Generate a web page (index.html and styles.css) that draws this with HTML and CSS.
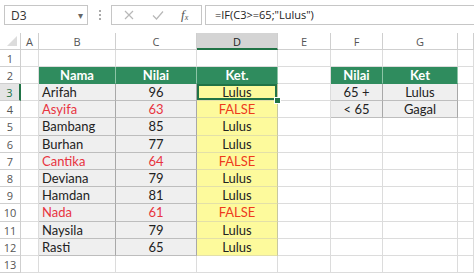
FILE: index.html
```html
<!DOCTYPE html>
<html>
<head>
<meta charset="utf-8">
<link rel="stylesheet" href="styles.css">
</head>
<body>
<div class="toolbar">
  <div class="namebox"><span>D3</span><span class="dd">▾</span></div>
  <div class="dots"><i></i><i></i><i></i></div>
  <div class="fbtns">
    <svg width="12" height="12" viewBox="0 0 12 12"><path d="M2 2 L10 10 M10 2 L2 10" stroke="#b8b8b8" stroke-width="1.2" fill="none"/></svg>
    <svg width="14" height="12" viewBox="0 0 14 12"><path d="M2 6.5 L5.5 10 L12 2.5" stroke="#b8b8b8" stroke-width="1.2" fill="none"/></svg>
    <span class="fx">f<sub>x</sub></span>
  </div>
  <div class="fbar">=IF(C3&gt;=65;"Lulus")</div>
</div>
<div class="sheet">
  <div class="c corner"><span class="tri"></span></div><div class="c ch">A</div><div class="c ch">B</div><div class="c ch">C</div><div class="c ch sel">D</div><div class="c ch">E</div><div class="c ch">F</div><div class="c ch">G</div><div class="c ch"></div>

  <div class="c rh">1</div><div class="c"></div><div class="c"></div><div class="c"></div><div class="c"></div><div class="c"></div><div class="c"></div><div class="c"></div><div class="c"></div>

  <div class="c rh">2</div><div class="c"></div><div class="c hd">Nama</div><div class="c hd">Nilai</div><div class="c hd">Ket.</div><div class="c"></div><div class="c hd">Nilai</div><div class="c hd">Ket</div><div class="c"></div>

  <div class="c rh rsel">3</div><div class="c"></div><div class="c g l">Arifah</div><div class="c g">96</div><div class="c y act">Lulus<span class="handle"></span></div><div class="c"></div><div class="c g">65 +</div><div class="c g">Lulus</div><div class="c"></div>

  <div class="c rh">4</div><div class="c"></div><div class="c g l red">Asyifa</div><div class="c g red">63</div><div class="c y f">FALSE</div><div class="c"></div><div class="c g">&lt; 65</div><div class="c g">Gagal</div><div class="c"></div>

  <div class="c rh">5</div><div class="c"></div><div class="c g l">Bambang</div><div class="c g">85</div><div class="c y">Lulus</div><div class="c"></div><div class="c"></div><div class="c"></div><div class="c"></div>

  <div class="c rh">6</div><div class="c"></div><div class="c g l">Burhan</div><div class="c g">77</div><div class="c y">Lulus</div><div class="c"></div><div class="c"></div><div class="c"></div><div class="c"></div>

  <div class="c rh">7</div><div class="c"></div><div class="c g l red">Cantika</div><div class="c g red">64</div><div class="c y f">FALSE</div><div class="c"></div><div class="c"></div><div class="c"></div><div class="c"></div>

  <div class="c rh">8</div><div class="c"></div><div class="c g l">Deviana</div><div class="c g">79</div><div class="c y">Lulus</div><div class="c"></div><div class="c"></div><div class="c"></div><div class="c"></div>

  <div class="c rh">9</div><div class="c"></div><div class="c g l">Hamdan</div><div class="c g">81</div><div class="c y">Lulus</div><div class="c"></div><div class="c"></div><div class="c"></div><div class="c"></div>

  <div class="c rh">10</div><div class="c"></div><div class="c g l red">Nada</div><div class="c g red">61</div><div class="c y f">FALSE</div><div class="c"></div><div class="c"></div><div class="c"></div><div class="c"></div>

  <div class="c rh">11</div><div class="c"></div><div class="c g l">Naysila</div><div class="c g">79</div><div class="c y">Lulus</div><div class="c"></div><div class="c"></div><div class="c"></div><div class="c"></div>

  <div class="c rh">12</div><div class="c"></div><div class="c g l">Rasti</div><div class="c g">65</div><div class="c y">Lulus</div><div class="c"></div><div class="c"></div><div class="c"></div><div class="c"></div>

  <div class="c rh">13</div><div class="c"></div><div class="c"></div><div class="c"></div><div class="c"></div><div class="c"></div><div class="c"></div><div class="c"></div><div class="c"></div>
</div>
</body>
</html>
```

FILE: styles.css
```css
html, body {
  margin: 0;
  padding: 0;
  background: #fff;
  overflow: hidden;
  width: 474px;
  height: 273px;
}
body {
  font-family: Lato, "Open Sans", sans-serif;
  color: #222;
}
.toolbar {
  height: 33px;
  display: flex;
  align-items: flex-start;
  padding-top: 5px;
  box-sizing: border-box;
  background: #fff;
}
.namebox {
  margin-left: 4px;
  width: 84px;
  height: 20px;
  box-sizing: border-box;
  border: 1px solid #c6c6c6;
  display: flex;
  align-items: center;
  justify-content: space-between;
  padding: 0 4px 0 6px;
  font-family: "Open Sans", sans-serif;
  font-size: 12px;
  color: #333;
}
.namebox .dd {
  font-size: 10px;
  color: #666;
}
.dots {
  width: 23px;
  height: 20px;
  display: flex;
  flex-direction: column;
  align-items: center;
  justify-content: center;
  gap: 2px;
}
.dots i {
  display: block;
  width: 2px;
  height: 2px;
  background: #aaa;
}
.fbtns {
  width: 91px;
  height: 20px;
  box-sizing: border-box;
  border: 1px solid #c6c6c6;
  display: flex;
  align-items: center;
  padding-left: 11px;
  gap: 16px;
}
.fx {
  font-family: "Liberation Serif", serif;
  font-style: italic;
  font-size: 13px;
  color: #555;
  line-height: 1;
}
.fx sub {
  font-size: 8px;
  vertical-align: -1px;
}
.fbar {
  margin-left: 3px;
  flex: 1;
  height: 20px;
  box-sizing: border-box;
  border: 1px solid #c6c6c6;
  border-right: none;
  padding-left: 9px;
  font-family: "Open Sans", sans-serif;
  font-size: 11px;
  line-height: 18px;
  color: #222;
}
.sheet {
  display: grid;
  grid-template-columns: 21px 18px 77px 81px 81px 53px 52px 75px 16px;
  grid-template-rows: 17px 17px 17px repeat(11, 17.2px);
}
.c {
  position: relative;
  box-sizing: border-box;
  border-right: 1px solid #dcdcdc;
  border-bottom: 1px solid #dcdcdc;
  font-size: 13px;
  line-height: 17px;
  text-align: center;
  white-space: nowrap;
  overflow: visible;
}
.corner {
  border-color: #cfcfcf;
}
.tri {
  position: absolute;
  right: 3px;
  bottom: 3px;
  width: 0;
  height: 0;
  border-left: 10px solid transparent;
  border-bottom: 10px solid #dcdcdc;
}
.ch {
  font-family: "Open Sans", sans-serif;
  font-size: 11px;
  color: #555;
  border-color: #cfcfcf;
}
.ch.sel {
  background: #d4d4d4;
  color: #222;
  border-bottom: 2px solid #217346;
}
.rh {
  font-family: "Open Sans", sans-serif;
  font-size: 11px;
  color: #555;
  border-color: #cfcfcf;
}
.rh.rsel {
  background: #e4e4e4;
  color: #217346;
  border-right: 2px solid #217346;
}
.hd {
  background: #2f8c5e;
  color: #fff;
  font-weight: bold;
  border-right: 1px solid #8cc4a6;
  border-bottom: 1px solid #2f8c5e;
}
.g {
  background: #efefef;
  border-right: 1px solid #a8a8a8;
  border-bottom: 1px solid #bdbdbd;
}
.l {
  text-align: left;
  padding-left: 3px;
}
.red {
  color: #e8343f;
}
.y {
  background: #fdfa9c;
  border-bottom: 1px solid #e3e0a8;
  border-right: 1px solid #c8c8a0;
}
.f {
  color: #ee3a1c;
}
.act {
  box-shadow: inset 0 0 0 2px #217346;
}
.handle {
  position: absolute;
  right: -4px;
  bottom: -4px;
  width: 5px;
  height: 5px;
  background: #217346;
  border: 1px solid #fff;
  z-index: 2;
}
```
